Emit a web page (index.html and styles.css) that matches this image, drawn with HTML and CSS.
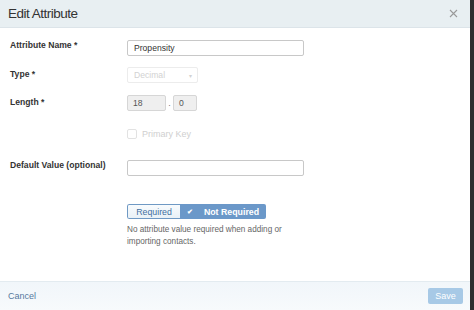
FILE: index.html
```html
<!DOCTYPE html>
<html>
<head>
<meta charset="utf-8">
<link rel="stylesheet" href="styles.css">
</head>
<body>
<div class="modal">
  <div class="modal-header">
    <span class="modal-title">Edit Attribute</span>
    <svg class="close" width="9" height="9" viewBox="0 0 9 9"><path d="M1 1L8 8M8 1L1 8" stroke="#9a9a9a" stroke-width="1.1" fill="none"/></svg>
  </div>
  <div class="modal-body">
    <div class="row r-name">
      <label class="lbl">Attribute Name *</label>
      <div class="ctrl"><input class="text-input wide" type="text" value="Propensity"></div>
    </div>
    <div class="row r-type">
      <label class="lbl">Type *</label>
      <div class="ctrl">
        <div class="select disabled"><span>Decimal</span><span class="caret">&#9662;</span></div>
      </div>
    </div>
    <div class="row r-length">
      <label class="lbl">Length *</label>
      <div class="ctrl len">
        <div class="num num-a">18</div>
        <span class="dot">.</span>
        <div class="num num-b">0</div>
      </div>
    </div>
    <div class="row r-pk">
      <div class="lbl"></div>
      <div class="ctrl pk"><span class="checkbox"></span><span class="pk-text">Primary Key</span></div>
    </div>
    <div class="row r-default">
      <label class="lbl">Default Value (optional)</label>
      <div class="ctrl"><input class="text-input wide" type="text" value=""></div>
    </div>
    <div class="row r-toggle">
      <div class="lbl"></div>
      <div class="ctrl">
        <div class="toggle">
          <span class="opt opt-off">Required</span>
          <span class="opt opt-on"><span class="check">&#10004;</span>Not Required</span>
        </div>
        <p class="help">No attribute value required when adding or<br>importing contacts.</p>
      </div>
    </div>
  </div>
  <div class="modal-footer">
    <span class="cancel">Cancel</span>
    <span class="save">Save</span>
  </div>
</div>
</body>
</html>
```

FILE: styles.css
```css
html, body {
  margin: 0;
  padding: 0;
  background: #2e2e2e;
  height: 310px;
  overflow: hidden;
}
.modal {
  width: 470px;
  height: 310px;
  background: #fff;
  display: flex;
  flex-direction: column;
  font-family: "Liberation Sans", Arial, sans-serif;
  color: #333;
}
.modal-header {
  height: 27px;
  background: #e8eff2;
  border-bottom: 1px solid #dce4e9;
  display: flex;
  align-items: center;
  justify-content: space-between;
  padding: 0 12px 0 8px;
}
.modal-title {
  font-size: 13.5px;
  color: #333;
  letter-spacing: -0.5px;
  margin-top: -1px;
}
.close { display: block; }
.modal-body {
  flex: 1;
  padding-top: 10px;
}
.row {
  display: flex;
  align-items: center;
}
.lbl {
  width: 127px;
  padding-left: 10px;
  box-sizing: border-box;
  font-size: 8.6px;
  font-weight: bold;
  color: #333;
  flex-shrink: 0;
  margin-top: -2px;
}
.r-name, .r-type, .r-length, .r-default { height: 16px; }
.r-name { margin-bottom: 13px; }
.r-type { margin-bottom: 12px; }
.r-pk { margin-top: 18px; height: 10px; }
.r-default { margin-top: 19px; }
.r-toggle { margin-top: 30px; align-items: flex-start; }
.text-input {
  box-sizing: border-box;
  height: 16px;
  border: 1px solid #c8c8c8;
  border-radius: 2px;
  padding: 0 6px;
  font-family: "Liberation Sans", Arial, sans-serif;
  font-size: 8.6px;
  color: #333;
  outline: none;
  margin: 0;
}
.wide { width: 177px; }
.select {
  box-sizing: border-box;
  width: 71px;
  height: 16px;
  border: 1px solid #ececec;
  border-radius: 2px;
  display: flex;
  align-items: center;
  justify-content: space-between;
  padding: 0 5px 0 6px;
  font-size: 8.6px;
  color: #d2d2d2;
}
.caret { font-size: 6px; color: #d2d2d2; }
.len { display: flex; align-items: center; }
.num {
  box-sizing: border-box;
  height: 16px;
  background: #efefef;
  border: 1px solid #d6d6d6;
  border-radius: 2px;
  font-size: 8.6px;
  color: #555;
  display: flex;
  align-items: center;
  padding-left: 5px;
}
.num-a { width: 39px; }
.num-b { width: 24px; }
.dot { width: 7px; text-align: center; font-size: 9px; color: #777; }
.pk { display: flex; align-items: center; }
.checkbox {
  box-sizing: border-box;
  width: 10px;
  height: 10px;
  border: 1px solid #e2e2e2;
  border-radius: 2px;
  margin-right: 5px;
}
.pk-text { font-size: 9px; color: #cfcfcf; }
.toggle {
  display: flex;
  width: 139px;
  height: 15px;
  border-radius: 2px;
  overflow: hidden;
  box-sizing: border-box;
}
.opt {
  display: flex;
  align-items: center;
  justify-content: center;
  font-size: 8.8px;
  box-sizing: border-box;
}
.opt-off {
  width: 53px;
  background: linear-gradient(#f8fbfd, #e9f1f7);
  border: 1px solid #6f99c4;
  border-right: none;
  border-radius: 2px 0 0 2px;
  color: #3f6f9f;
}
.opt-on {
  flex: 1;
  background: #6b98c9;
  color: #fff;
  font-weight: bold;
}
.check { font-size: 7px; margin-right: 11px; }
.help {
  margin: 5px 0 0;
  font-size: 8.2px;
  line-height: 12px;
  color: #666;
}
.modal-footer {
  height: 28px;
  border-top: 1px solid #e3ebf0;
  background: linear-gradient(#f1f6fa, #f7fafc);
  display: flex;
  align-items: center;
  justify-content: space-between;
  padding: 0 7px 0 8px;
}
.cancel { font-size: 9px; color: #57799e; }
.save {
  width: 35px;
  height: 16px;
  background: #a7c9e6;
  border-radius: 2px;
  color: #fff;
  font-size: 9px;
  display: flex;
  align-items: center;
  justify-content: center;
}
```
